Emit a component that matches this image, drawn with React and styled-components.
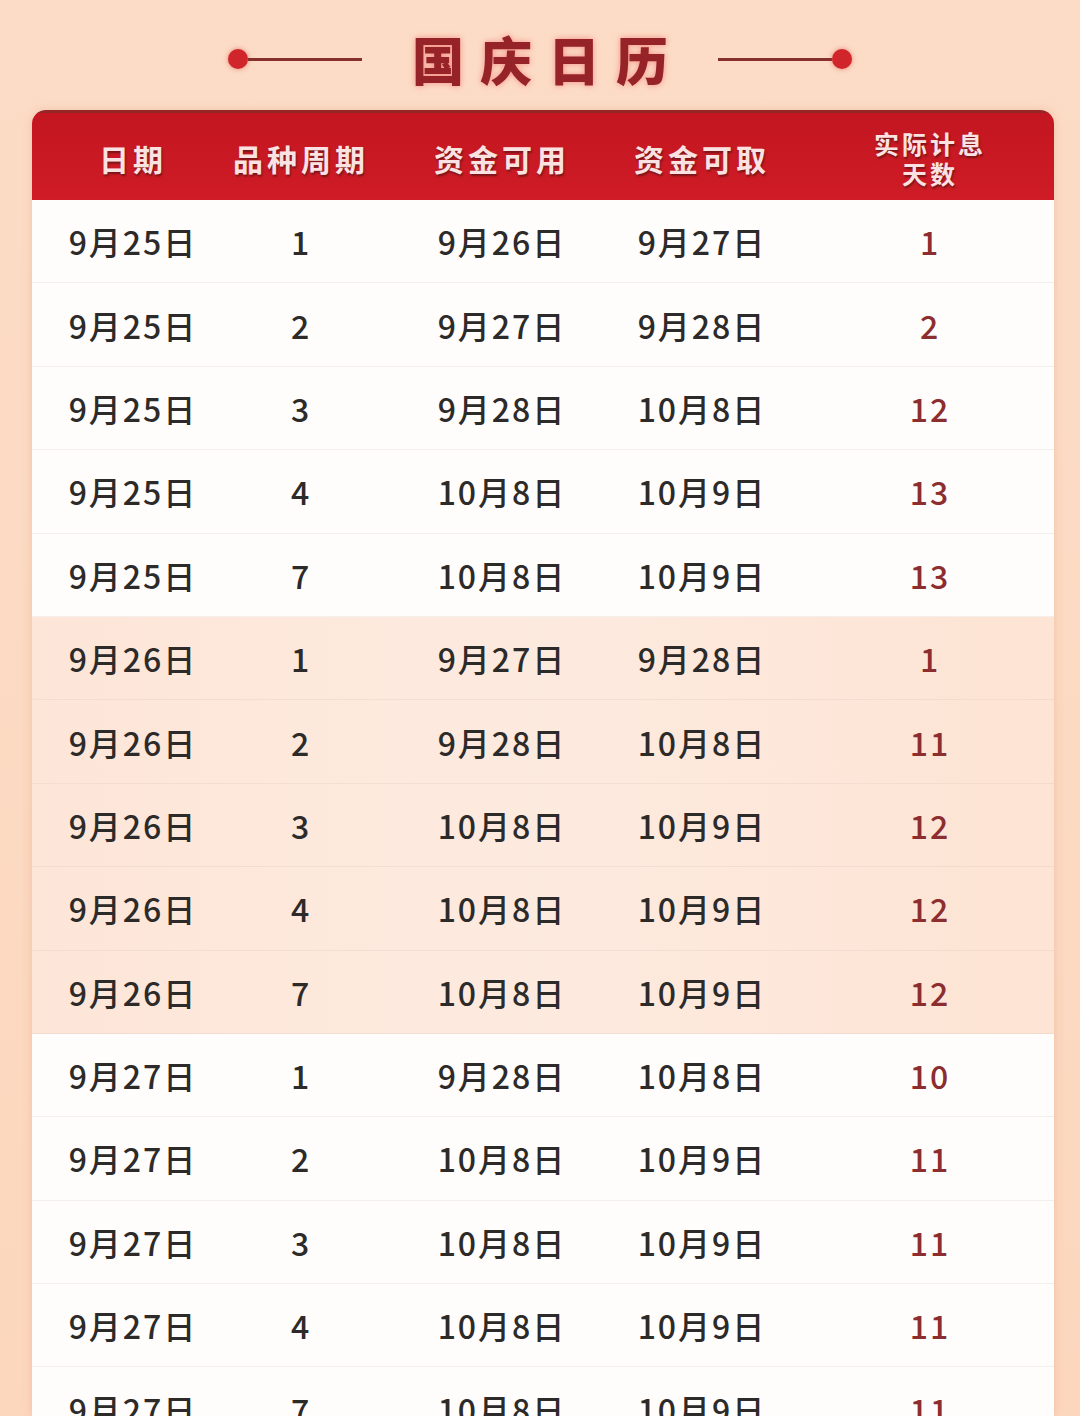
import React from 'react'
import styled, { createGlobalStyle } from 'styled-components'

const GlobalStyle = createGlobalStyle`
  html, body {
    margin: 0;
    padding: 0;
    background: #fcd8bf;
    font-family: "Noto Sans CJK SC", "Noto Sans", sans-serif;
  }
`

const rows = [
  ['9月25日', '1', '9月26日', '9月27日', '1'],
  ['9月25日', '2', '9月27日', '9月28日', '2'],
  ['9月25日', '3', '9月28日', '10月8日', '12'],
  ['9月25日', '4', '10月8日', '10月9日', '13'],
  ['9月25日', '7', '10月8日', '10月9日', '13'],
  ['9月26日', '1', '9月27日', '9月28日', '1'],
  ['9月26日', '2', '9月28日', '10月8日', '11'],
  ['9月26日', '3', '10月8日', '10月9日', '12'],
  ['9月26日', '4', '10月8日', '10月9日', '12'],
  ['9月26日', '7', '10月8日', '10月9日', '12'],
  ['9月27日', '1', '9月28日', '10月8日', '10'],
  ['9月27日', '2', '10月8日', '10月9日', '11'],
  ['9月27日', '3', '10月8日', '10月9日', '11'],
  ['9月27日', '4', '10月8日', '10月9日', '11'],
  ['9月27日', '7', '10月8日', '10月9日', '11'],
]

export default function App() {
  return (
    <Page>
      <GlobalStyle />
      <TitleBar>
        <Rule><Dot /><Line /></Rule>
        <Title>国庆日历</Title>
        <Rule><Line /><Dot /></Rule>
      </TitleBar>
      <Card>
        <HeadRow>
          <HeadCell>日期</HeadCell>
          <HeadCell>品种周期</HeadCell>
          <HeadCell>资金可用</HeadCell>
          <HeadCell>资金可取</HeadCell>
          <HeadCell small last>
            <HeadLine>实际计息</HeadLine>
            <HeadLine>天数</HeadLine>
          </HeadCell>
        </HeadRow>
        <Body>
          {[0, 1, 2].map((g) => (
            <Group key={g} tinted={g === 1}>
              {rows.slice(g * 5, g * 5 + 5).map((r, i) => (
                <Row key={i}>
                  <Cell>{r[0]}</Cell>
                  <Cell>{r[1]}</Cell>
                  <Cell>{r[2]}</Cell>
                  <Cell>{r[3]}</Cell>
                  <Cell last>{r[4]}</Cell>
                </Row>
              ))}
            </Group>
          ))}
        </Body>
      </Card>
    </Page>
  )
}

const Page = styled.div`
  width: 1080px;
  height: 1416px;
  overflow: hidden;
  background: linear-gradient(180deg, #fcdcc6 0%, #fcd7be 100%);
  display: flex;
  flex-direction: column;
`

const TitleBar = styled.div`
  height: 110px;
  flex-shrink: 0;
  display: flex;
  align-items: center;
  justify-content: center;
  gap: 50px;
  padding-top: 8px;
  box-sizing: border-box;
`

const Rule = styled.div`
  display: flex;
  align-items: center;
  width: 134px;
`

const Dot = styled.span`
  width: 20px;
  height: 20px;
  border-radius: 50%;
  background: #cf252b;
  box-shadow: 0 0 5px rgba(210, 40, 40, 0.5);
  flex-shrink: 0;
`

const Line = styled.span`
  flex: 1;
  height: 3px;
  background: #86302c;
`

const Title = styled.h1`
  margin: 0;
  font-size: 52px;
  font-weight: 900;
  letter-spacing: 16px;
  margin-right: -16px;
  color: #962328;
  text-shadow: 0 0 6px rgba(240, 90, 90, 0.6);
  line-height: 1;
`

const Card = styled.div`
  margin: 0 26px 0 32px;
  border-radius: 14px 14px 0 0;
  overflow: hidden;
  box-shadow: 0 0 10px rgba(210, 120, 90, 0.25);
  flex: 1;
  display: flex;
  flex-direction: column;
`

const Cols = `
  display: grid;
  grid-template-columns: 202px 134px 268px 132px 1fr;
  align-items: center;
`

const HeadRow = styled.div`
  ${Cols}
  height: 90px;
  flex-shrink: 0;
  background: linear-gradient(180deg, #c31620 0%, #cf1c27 100%);
  border-top: 3px solid #942626;
  box-sizing: border-box;
  padding-top: 2px;
`

const HeadCell = styled.div`
  display: flex;
  flex-direction: column;
  align-items: center;
  gap: 2px;
  color: #fbe2e2;
  font-weight: 700;
  font-size: ${(p) => (p.small ? '25px' : '30px')};
  letter-spacing: ${(p) => (p.small ? '3px' : '4px')};
  line-height: ${(p) => (p.small ? '28px' : '1.2')};
  padding-left: ${(p) => (p.last ? '38px' : '0')};
  text-shadow: 1px 2px 2px rgba(90, 20, 20, 0.75);
  white-space: nowrap;
`

const HeadLine = styled.span`
  display: block;
`

const Body = styled.div`
  flex: 1;
  background: #fffdfb;
`

const Group = styled.div`
  background: ${(p) => (p.tinted ? 'linear-gradient(90deg, #fde6d8 0%, #fdeadf 50%, #fde4d4 100%)' : '#fffdfb')};
`

const Row = styled.div`
  ${Cols}
  height: 83.4px;
  border-bottom: 1px solid rgba(200, 180, 170, 0.18);
  box-sizing: border-box;
`

const Cell = styled.div`
  text-align: center;
  font-size: 32px;
  font-weight: 500;
  letter-spacing: 2px;
  color: ${(p) => (p.last ? '#8c2d2f' : '#2d2a2a')};
  padding-left: ${(p) => (p.last ? '38px' : '0')};
  white-space: nowrap;
`
